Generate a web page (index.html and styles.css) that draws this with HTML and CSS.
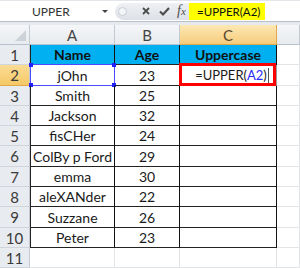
FILE: index.html
```html
<!DOCTYPE html>
<html lang="en">
  <head>
    <meta charset="UTF-8" />
    <title>UPPER function</title>
    <link rel="stylesheet" href="styles.css">
  </head>
  <body>
    <div class="formula-bar">
      <div class="name-box">
        <span class="label">UPPER</span>
        <span class="arrow"></span>
      </div>
      <div class="tools">
        <span class="grip"></span>
        <svg class="icon-x" width="8" height="8" viewBox="0 0 8 8">
          <path d="M1 1 L7 7 M7 1 L1 7" stroke="#4d4d4d" stroke-width="1.8" fill="none" />
        </svg>
        <svg class="icon-ok" width="11" height="9" viewBox="0 0 11 9">
          <path d="M1 4.5 L4 7.5 L10 1" stroke="#4d4d4d" stroke-width="2.1" fill="none" />
        </svg>
        <span class="fx">f<span class="fx-x">x</span></span>
      </div>
      <div class="formula"><span class="hl">=UPPER(A2)</span></div>
    </div>
    <div class="strip"></div>

    <div class="sheet">
      <!-- column headers -->
      <div class="corner"><span class="tri"></span></div>
      <div class="ch">A</div>
      <div class="ch">B</div>
      <div class="ch ch-sel">C</div>
      <div class="ch"></div>

      <!-- row 1 -->
      <div class="rh">1</div>
      <div class="c a hd">Name</div>
      <div class="c hd">Age</div>
      <div class="c hd">Uppercase</div>
      <div class="e"></div>

      <!-- row 2 -->
      <div class="rh rh-sel">2</div>
      <div class="c a ref">jOhn
        <span class="ref-box"><i class="h tl"></i><i class="h tr"></i><i class="h bl"></i><i class="h br"></i></span>
      </div>
      <div class="c">23</div>
      <div class="c edit">=UPPER(<span class="blue">A2</span>)<span class="caret"></span>
        <span class="red-box"></span>
      </div>
      <div class="e"></div>

      <div class="rh">3</div>
      <div class="c a">Smith</div>
      <div class="c">25</div>
      <div class="c"></div>
      <div class="e"></div>

      <div class="rh">4</div>
      <div class="c a">Jackson</div>
      <div class="c">32</div>
      <div class="c"></div>
      <div class="e"></div>

      <div class="rh">5</div>
      <div class="c a">fisCHer</div>
      <div class="c">24</div>
      <div class="c"></div>
      <div class="e"></div>

      <div class="rh">6</div>
      <div class="c a">ColBy p Ford</div>
      <div class="c">29</div>
      <div class="c"></div>
      <div class="e"></div>

      <div class="rh">7</div>
      <div class="c a">emma</div>
      <div class="c">30</div>
      <div class="c"></div>
      <div class="e"></div>

      <div class="rh">8</div>
      <div class="c a">aleXANder</div>
      <div class="c">22</div>
      <div class="c"></div>
      <div class="e"></div>

      <div class="rh">9</div>
      <div class="c a">Suzzane</div>
      <div class="c">26</div>
      <div class="c"></div>
      <div class="e"></div>

      <div class="rh">10</div>
      <div class="c a">Peter</div>
      <div class="c">23</div>
      <div class="c"></div>
      <div class="e"></div>

      <!-- row 11 -->
      <div class="rh">11</div>
      <div class="e"></div>
      <div class="e"></div>
      <div class="e"></div>
      <div class="e"></div>
    </div>
  </body>
</html>
```

FILE: styles.css
```css
* {
  box-sizing: border-box;
}

body {
  margin: 0;
  width: 300px;
  height: 268px;
  overflow: hidden;
  background: #fff;
  font-family: Lato, "Open Sans", sans-serif;
  color: #1a1a1a;
}

/* formula bar */

.formula-bar {
  display: flex;
  align-items: center;
  height: 22px;
  background: #fff;
  border-top: 1px solid #e2e5e9;
  border-bottom: 1px solid #b8bfc8;
}

.name-box {
  width: 115px;
  display: flex;
  align-items: center;
  padding-left: 32px;
  padding-right: 7px;
  font-size: 12px;
  color: #333;
}

.name-box .label {
  flex: 1;
}

.arrow {
  width: 0;
  height: 0;
  border-left: 3px solid transparent;
  border-right: 3px solid transparent;
  border-top: 3px solid #444;
}

.tools {
  width: 74px;
  height: 17px;
  display: flex;
  align-items: center;
  background: linear-gradient(#eef0f3, #dde1e7);
  border-radius: 9px 0 0 9px;
  padding-left: 3px;
}

.grip {
  width: 9px;
  height: 9px;
  border-radius: 50%;
  border: 1px solid #c9ced5;
  background: #f3f5f7;
  margin-right: 15px;
}

.icon-x {
  margin-right: 9px;
}

.icon-ok {
  margin-right: 7px;
}

.fx {
  font-family: "Liberation Serif", serif;
  font-style: italic;
  font-size: 14px;
  color: #4d4d4d;
  line-height: 1;
}

.fx-x {
  font-size: 11px;
}

.formula {
  flex: 1;
  font-size: 11.5px;
}

.hl {
  display: inline-block;
  width: 76px;
  height: 17px;
  line-height: 17px;
  background: #ffff00;
  padding-left: 8px;
  color: #111;
}

.strip {
  height: 3px;
  background: #e6eaef;
}

/* sheet grid */

.sheet {
  display: grid;
  grid-template-columns: 30px 85px 65px 97px 1fr;
  grid-template-rows: 20px 20px 21px 20px 20px 20px 21px 20px 20px 21px 20px 20px;
  font-size: 14px;
}

.corner {
  position: relative;
  background: linear-gradient(#f4f6f8, #e8ebef);
  border-right: 1px solid #c4cad2;
  border-bottom: 1px solid #b9c2cc;
}

.tri {
  position: absolute;
  right: 3px;
  bottom: 3px;
  width: 0;
  height: 0;
  border-left: 11px solid transparent;
  border-bottom: 11px solid #cdd2d8;
}

.ch {
  display: flex;
  align-items: center;
  justify-content: center;
  background: linear-gradient(#f4f6f8, #e8ebef);
  border-right: 1px solid #c4cad2;
  border-bottom: 1px solid #b9c2cc;
  color: #444;
  font-size: 15px;
}

.ch-sel {
  background: linear-gradient(#fde8b4, #f6cc7c);
  border-right-color: #e0a84c;
  border-bottom-color: #e0a84c;
  color: #5a4a30;
}

.rh {
  display: flex;
  align-items: center;
  justify-content: center;
  background: #e8ebef;
  border-right: 1px solid #c4cad2;
  border-bottom: 1px solid #d0d5dc;
  color: #3a3a3a;
  font-size: 15px;
}

.rh-sel {
  background: linear-gradient(#fbdc95, #f5c866);
  border-bottom-color: #e0a84c;
}

.c {
  position: relative;
  display: flex;
  align-items: center;
  justify-content: center;
  border-right: 1px solid #111;
  border-bottom: 1px solid #222;
  white-space: nowrap;
}

.a {
  border-left: 1px solid #222;
}

.hd {
  background: #00b0f0;
  font-weight: bold;
  color: #111;
}

.e {
  border-right: 1px solid #e2e4e6;
  border-bottom: 1px solid #e2e4e6;
}

/* A2 reference highlight */

.ref-box {
  position: absolute;
  top: -1px;
  left: -1px;
  right: -1px;
  bottom: -1px;
  border: 1px solid #4a4aff;
}

.h {
  position: absolute;
  width: 4px;
  height: 4px;
  background: #2020ff;
}

.tl {
  top: -2px;
  left: -2px;
}

.tr {
  top: -2px;
  right: -2px;
}

.bl {
  bottom: -2px;
  left: -2px;
}

.br {
  bottom: -2px;
  right: -2px;
}

/* C2 being edited */

.edit {
  padding-left: 9px;
  font-size: 13px;
  border-right: 2px solid #9a9a9a;
}

.blue {
  color: #2a2aff;
}

.caret {
  display: inline-block;
  width: 1px;
  height: 15px;
  margin-left: 1px;
  background: #555;
}

.red-box {
  position: absolute;
  top: -2px;
  left: -1px;
  width: 97px;
  height: 23px;
  border: 3px solid #ff0000;
}
```
